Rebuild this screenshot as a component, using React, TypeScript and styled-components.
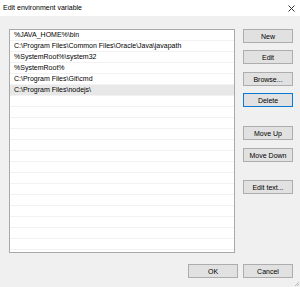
import React, { FC } from "react";
import styled, { createGlobalStyle } from "styled-components";

const GlobalStyle = createGlobalStyle`
  html, body {
    margin: 0;
    padding: 0;
    background: #f0f0f0;
  }
  body {
    font-family: "Liberation Sans", Arial, sans-serif;
    font-size: 7px;
    color: #000;
  }
`;

const paths = [
  "%JAVA_HOME%\\bin",
  "C:\\Program Files\\Common Files\\Oracle\\Java\\javapath",
  "%SystemRoot%\\system32",
  "%SystemRoot%",
  "C:\\Program Files\\Git\\cmd",
  "C:\\Program Files\\nodejs\\",
];

const SELECTED = 5;
const TOTAL_ROWS = 21;

const sideButtons: { label: string; top: number; focused?: boolean }[] = [
  { label: "New", top: 0 },
  { label: "Edit", top: 7 },
  { label: "Browse...", top: 8 },
  { label: "Delete", top: 7, focused: true },
  { label: "Move Up", top: 19 },
  { label: "Move Down", top: 8 },
  { label: "Edit text...", top: 18 },
];

const App: FC = () => {
  const rows = Array.from({ length: TOTAL_ROWS }, (_, i) => paths[i] ?? "");

  return (
    <>
      <GlobalStyle />
      <Window>
        <TitleBar>
          <Title>{"Edit environment variable"}</Title>
          <Close aria-label="Close">
            <svg width="7" height="7" viewBox="0 0 7 7">
              <path d="M0.5 0.5 L6.5 6.5 M6.5 0.5 L0.5 6.5" stroke="#333" strokeWidth="1" />
            </svg>
          </Close>
        </TitleBar>

        <Body>
          <Main>
            <List>
              {rows.map((text, i) => (
                <Row key={i} $selected={i === SELECTED}>
                  {text}
                </Row>
              ))}
            </List>

            <Side>
              {sideButtons.map((b) => (
                <SideButton key={b.label} $focused={b.focused} $top={b.top}>
                  {b.label}
                </SideButton>
              ))}
            </Side>
          </Main>

          <Footer>
            <Button>{"OK"}</Button>
            <Button>{"Cancel"}</Button>
          </Footer>
        </Body>

        <Grip>
          <svg width="4" height="4" viewBox="0 0 4 4">
            <rect x="3" y="0" width="1" height="1" fill="#b8b8b8" />
            <rect x="2" y="1" width="1" height="1" fill="#b8b8b8" />
            <rect x="1" y="2" width="1" height="1" fill="#b8b8b8" />
            <rect x="3" y="2" width="1" height="1" fill="#b8b8b8" />
            <rect x="0" y="3" width="1" height="1" fill="#b8b8b8" />
            <rect x="2" y="3" width="1" height="1" fill="#b8b8b8" />
          </svg>
        </Grip>
      </Window>
    </>
  );
};

export default App;

const Window = styled.div`
  position: relative;
  width: 300px;
  height: 287px;
  background: #f0f0f0;
  display: flex;
  flex-direction: column;
  overflow: hidden;
`;

const TitleBar = styled.div`
  height: 16px;
  background: #ffffff;
  display: flex;
  align-items: center;
  justify-content: space-between;
  padding: 0 5px 1px 3px;
  box-sizing: border-box;
`;

const Title = styled.div`
  font-size: 7px;
  color: #000;
`;

const Close = styled.div`
  width: 7px;
  height: 7px;
  display: flex;
  margin-top: 2px;
`;

const Body = styled.div`
  flex: 1;
  display: flex;
  flex-direction: column;
  padding: 13px 7px 0 9px;
`;

const Main = styled.div`
  display: flex;
  gap: 8px;
`;

const List = styled.div`
  width: 226px;
  height: 224px;
  box-sizing: border-box;
  background: #ffffff;
  border: 1px solid #a9a9a9;
  overflow: hidden;
  display: flex;
  flex-direction: column;
`;

const Row = styled.div<{ $selected?: boolean }>`
  flex: 0 0 11px;
  height: 11px;
  box-sizing: border-box;
  line-height: 10px;
  padding-left: 4px;
  border-bottom: 1px solid #f2f2f2;
  background: ${(p) => (p.$selected ? "#e8e8e8" : "transparent")};
  white-space: nowrap;
`;

const Side = styled.div`
  display: flex;
  flex-direction: column;
`;

const Button = styled.div<{ $focused?: boolean }>`
  width: 50px;
  height: 14px;
  box-sizing: border-box;
  display: flex;
  align-items: center;
  justify-content: center;
  background: #e1e1e1;
  border: 1px solid ${(p) => (p.$focused ? "#0a78d7" : "#adadad")};
  font-size: 7px;
  color: #000;
`;

const SideButton = styled(Button)<{ $top: number }>`
  margin-top: ${(p) => p.$top}px;
`;

const Footer = styled.div`
  display: flex;
  justify-content: flex-end;
  gap: 5px;
  margin-top: 11px;
`;

const Grip = styled.div`
  position: absolute;
  right: 1px;
  bottom: 1px;
  width: 4px;
  height: 4px;
  display: flex;
`;
